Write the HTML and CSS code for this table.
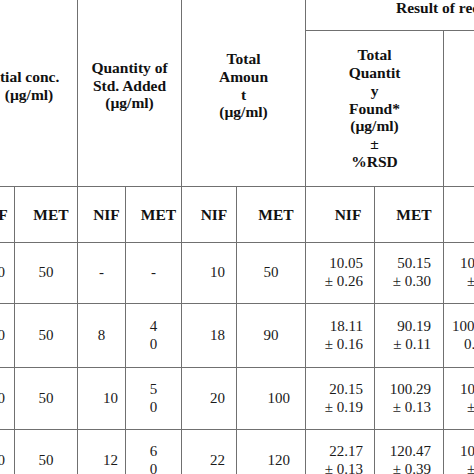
FILE: index.html
```html
<!DOCTYPE html>
<html>
<head>
<meta charset="utf-8">
<link rel="stylesheet" href="styles.css">
</head>
<body>
<div class="sheet">
<table class="tbl">
  <colgroup>
    <col class="w34"><col class="w63"><col class="w48"><col class="w56"><col class="w55"><col class="w69"><col class="w69"><col class="w69"><col class="w72"><col class="w69">
  </colgroup>
  <tr class="ra">
    <th colspan="2" rowspan="2"><span class="shiftl">Initial conc.</span><br>(µg/ml)</th>
    <th colspan="2" rowspan="2">Quantity of<br>Std. Added<br>(µg/ml)</th>
    <th colspan="2" rowspan="2">Total<br>Amoun<br>t<br>(µg/ml)</th>
    <th colspan="4" class="result">Result of recovery</th>
  </tr>
  <tr class="rb">
    <th colspan="2">Total<br>Quantit<br>y<br>Found*<br>(µg/ml)<br>±<br>%RSD</th>
    <th colspan="2"></th>
  </tr>
  <tr class="rc">
    <th class="sub first">NIF</th><th class="sub">MET</th>
    <th class="sub">NIF</th><th class="sub">MET</th>
    <th class="sub">NIF</th><th class="sub">MET</th>
    <th class="sub sub8">NIF</th><th class="sub">MET</th>
    <th class="sub far">NIF</th><th class="sub">MET</th>
  </tr>
  <tr class="r1">
    <td>10</td><td>50</td>
    <td>-</td><td>-</td>
    <td class="pr11">10</td><td>50</td>
    <td class="res1">10.05<br>± 0.26</td><td class="res2">50.15<br>± 0.30</td>
    <td class="lastc"><span class="l1">100.50</span><span class="l2">± 0.26</span></td><td></td>
  </tr>
  <tr class="r2">
    <td>10</td><td>50</td>
    <td>8</td><td>4<br>0</td>
    <td class="pr11">18</td><td>90</td>
    <td class="res1">18.11<br>± 0.16</td><td class="res2">90.19<br>± 0.11</td>
    <td class="lastc"><span class="l1 wide">100.61 ±</span><span class="l2 narrow">0.16</span></td><td></td>
  </tr>
  <tr class="r3">
    <td>10</td><td>50</td>
    <td class="pr7">10</td><td>5<br>0</td>
    <td class="pr11">20</td><td class="pr15">100</td>
    <td class="res1">20.15<br>± 0.19</td><td class="res2">100.29<br>± 0.13</td>
    <td class="lastc"><span class="l1">100.75</span><span class="l2">± 0.19</span></td><td></td>
  </tr>
  <tr class="r4">
    <td>10</td><td>50</td>
    <td class="pr7">12</td><td>6<br>0</td>
    <td class="pr11">22</td><td class="pr15">120</td>
    <td class="res1">22.17<br>± 0.13</td><td class="res2">120.47<br>± 0.39</td>
    <td class="lastc"><span class="l1">100.77</span><span class="l2">± 0.13</span></td><td></td>
  </tr>
</table>
</div>
</body>
</html>
```

FILE: styles.css
```css
html, body {
  margin: 0;
  padding: 0;
  background: #ffffff;
  overflow: hidden;
  width: 474px;
  height: 474px;
}
.sheet {
  margin-left: -20px;
  margin-top: -16px;
}
.tbl {
  border-collapse: collapse;
  table-layout: fixed;
  width: 604px;
  font-family: "Liberation Serif", "Times New Roman", serif;
  color: #111;
}
.w34 { width: 34px; }
.w48 { width: 48px; }
.w55 { width: 55px; }
.w56 { width: 56px; }
.w63 { width: 63px; }
.w69 { width: 69px; }
.w72 { width: 72px; }
.tbl th, .tbl td {
  font-family: "Liberation Serif", "Times New Roman", serif;
  border: 1.5px solid #707070;
  padding: 0;
  vertical-align: middle;
  text-align: center;
  white-space: nowrap;
}
.tbl th {
  font-weight: bold;
  font-size: 15.5px;
  line-height: 17.8px;
  color: #111;
}
.tbl td {
  font-weight: normal;
  font-size: 15px;
  line-height: 17.7px;
  color: #1a1a1a;
}
.ra { height: 46px; }
.rb { height: 156px; }
.rc { height: 56px; }
.r1 { height: 61px; }
.r2 { height: 64px; }
.r3 { height: 62px; }
.r4 { height: 62px; }
.shiftl { padding-right: 19px; }
.tbl th.result {
  text-align: left;
  padding-left: 90px;
}
.tbl th.sub { padding-left: 10px; }
.tbl th.sub.first { padding-left: 0; padding-right: 8px; }
.tbl th.sub.sub8 { padding-left: 16px; }
.tbl th.sub.far { padding-left: 44px; }
.tbl td.pr7 { text-align: right; padding-right: 7px; }
.tbl td.pr11 { text-align: right; padding-right: 11px; }
.tbl td.pr15 { text-align: right; padding-right: 15px; }
.tbl td.res1 { text-align: right; padding-right: 11px; }
.tbl td.res2 { text-align: right; padding-right: 12px; }
.tbl td.lastc { text-align: left; padding-left: 16px; }
.l1, .l2 { display: block; }
.l2 { padding-left: 7px; }
.l1.wide { margin-left: -8px; }
.l2.narrow { margin-left: -3px; }
```
